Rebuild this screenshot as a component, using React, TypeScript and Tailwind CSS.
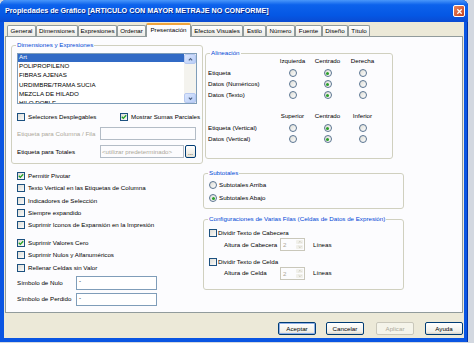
import clsx from 'clsx'

const Check = ({ on, off }: { on?: boolean; off?: boolean }) => (
  <span
    className={clsx(
      'flex h-[8px] w-[8px] shrink-0 items-center justify-center border bg-[linear-gradient(135deg,#dcdcd7,#fbfbf9)]',
      off ? 'border-[#c9c7ba]' : 'border-[#1c5180]'
    )}
  >
    {on && (
      <svg viewBox="0 0 6 6" className="h-[6px] w-[6px]">
        <path d="M0.8 2.8 L2.3 4.4 L5.2 1.2" fill="none" stroke="#21a121" strokeWidth="1.3" />
      </svg>
    )}
  </span>
)

const Radio = ({ on }: { on?: boolean }) => (
  <span className="flex h-[8px] w-[8px] shrink-0 items-center justify-center rounded-full border border-[#5a7491] bg-[linear-gradient(135deg,#dcdcd5,#ffffff)]">
    {on && <span className="h-[3px] w-[3px] rounded-full bg-[#2c9f2c]" />}
  </span>
)

const CheckRow = ({ on, label }: { on?: boolean; label: string }) => (
  <div className="flex h-[12.3px] items-center gap-[3px]">
    <Check on={on} />
    <span>{label}</span>
  </div>
)

const Group = ({
  title,
  className,
  children,
}: {
  title: string
  className?: string
  children: React.ReactNode
}) => (
  <fieldset className={clsx('rounded-[3px] border border-[#d0d0bf] p-0', className)}>
    <legend className="ml-[4px] px-[1px] leading-[8px] text-[#0046d5]">{title}</legend>
    {children}
  </fieldset>
)

const Spin = () => (
  <div className="flex h-[13px] w-[25px] border border-[#c9c7ba] bg-[#fcfcfe]">
    <span className="flex-1 pl-[2px] leading-[11px] text-[#aca899]">2</span>
    <div className="flex w-[9px] flex-col gap-px p-px">
      {['M1 4 L3 2 L5 4', 'M1 2 L3 4 L5 2'].map((d) => (
        <span key={d} className="flex flex-1 items-center justify-center rounded-[1px] bg-[#f1f0ea]">
          <svg viewBox="0 0 6 6" className="h-[4px] w-[4px]">
            <path d={d} fill="none" stroke="#c2c0b4" strokeWidth="1.2" />
          </svg>
        </span>
      ))}
    </div>
  </div>
)

const Btn = ({ text, kind, className }: { text: string; kind?: 'default' | 'off'; className?: string }) => (
  <div
    className={clsx(
      'flex h-[13px] w-[38px] items-center justify-center rounded-[2px] border',
      kind === 'off'
        ? 'border-[#c9c7ba] bg-[#f5f4ea] text-[#aca899]'
        : 'border-[#003c74] bg-[linear-gradient(180deg,#ffffff,#f0efe9_80%,#d8d2c6)]',
      kind === 'default' && 'shadow-[inset_0_0_0_1px_#8fb0e8]',
      className
    )}
  >
    {text}
  </div>
)

const tabs = [
  ['General', 'w-[29px]'],
  ['Dimensiones', 'w-[42px]'],
  ['Expresiones', 'w-[39px]'],
  ['Ordenar', 'w-[29px]'],
  ['Presentación', 'w-[45px]'],
  ['Efectos Visuales', 'w-[52px]'],
  ['Estilo', 'w-[23px]'],
  ['Número', 'w-[29px]'],
  ['Fuente', 'w-[27px]'],
  ['Diseño', 'w-[26px]'],
  ['Título', 'w-[22px]'],
]

const items = ['Art', 'POLIPROPILENO', 'FIBRAS AJENAS', 'URDIMBRE/TRAMA SUCIA', 'MEZCLA DE HILADO', 'HILO DOBLE']

const alignRows = ['Etiqueta', 'Datos (Numéricos)', 'Datos (Texto)']

const AlignRow = ({ label, sel, className }: { label: string; sel: number; className?: string }) => (
  <div className={clsx('flex h-[11px] items-center', className)}>
    <span className="w-[67px]">{label}</span>
    {[0, 1, 2].map((i) => (
      <span key={i} className="flex w-[35px] justify-center">
        <Radio on={i === sel} />
      </span>
    ))}
  </div>
)

const AlignHead = ({ cols, className }: { cols: string[]; className?: string }) => (
  <div className={clsx('flex h-[8px] items-center', className)}>
    <span className="w-[67px]" />
    {cols.map((c) => (
      <span key={c} className="w-[35px] text-center">
        {c}
      </span>
    ))}
  </div>
)

const ScrollBtn = ({ d }: { d: string }) => (
  <span className="flex h-[10px] w-full items-center justify-center rounded-[2px] border border-[#b6c8f0] bg-[linear-gradient(135deg,#dbe6fd,#b8cdf7)]">
    <svg viewBox="0 0 6 6" className="h-[5px] w-[5px]">
      <path d={d} fill="none" stroke="#4d6185" strokeWidth="1.4" />
    </svg>
  </span>
)

export default function App() {
  return (
    <div className="h-[343px] w-[474px] overflow-hidden whitespace-nowrap bg-[#d3d8e0] font-['Liberation_Sans',Arial,sans-serif] text-[6.2px] leading-[8px] text-black">
      <div className="flex h-[342px] w-[468px] flex-col overflow-hidden rounded-t-[6px] bg-[#0a55e2] shadow-[inset_-1px_0_0_#0032a8]">
        {/* title bar */}
        <div className="flex h-[22px] items-center justify-between bg-[linear-gradient(180deg,#4a97fa_0%,#0c62ec_22%,#0557e4_70%,#0a4bd2_100%)] pl-[5px] pr-[3px]">
          <span className="text-[7.2px] font-bold text-white [text-shadow:1px_1px_0_#0a2a8a]">
            Propiedades de Gráfico [ARTICULO CON MAYOR METRAJE NO CONFORME]
          </span>
          <span className="flex h-[12px] w-[12px] items-center justify-center rounded-[2px] border border-white bg-[linear-gradient(135deg,#e8865f,#c4421c)]">
            <svg viewBox="0 0 8 8" className="h-[7px] w-[7px]">
              <path d="M1.5 1.5 L6.5 6.5 M6.5 1.5 L1.5 6.5" stroke="white" strokeWidth="1.5" />
            </svg>
          </span>
        </div>

        {/* body */}
        <div className="mx-[4px] flex flex-1 flex-col bg-[#ece9d8] pt-[1px]">
          <div className="relative z-10 flex h-[14px] items-end pl-[3px]">
            {tabs.map(([t, w]) =>
              t === 'Presentación' ? (
                <div
                  key={t}
                  className={clsx(
                    'flex h-[14px] items-center justify-center rounded-t-[2px] border-x border-t-2 border-x-[#919b9c] border-t-[#f0a43c] bg-[#fcfcfe] pb-[2px]',
                    w
                  )}
                >
                  {t}
                </div>
              ) : (
                <div
                  key={t}
                  className={clsx(
                    'mb-[1px] flex h-[11px] items-center justify-center rounded-t-[2px] border border-b-0 border-[#919b9c] bg-[linear-gradient(180deg,#ffffff,#ecebe5)]',
                    w
                  )}
                >
                  {t}
                </div>
              )
            )}
          </div>

          {/* panel */}
          <div className="-mt-px ml-[1px] flex h-[277px] w-[458px] border border-[#919b9c] bg-[#fcfcfe] pl-[5px] pt-[4px]">
            {/* left column */}
            <div className="flex w-[192px] flex-col">
              <Group title="Dimensiones y Expresiones" className="w-[189px]">
                <div className="pb-[5px] pl-[5px] pr-[2px] pt-[4px]">
                  <div className="flex h-[51px] w-[180px] border border-[#7f9db9] bg-white">
                    <div className="flex-1 overflow-hidden">
                      <div className="-mt-[1.5px]">
                        {items.map((it, i) => (
                          <div
                            key={it}
                            className={clsx(
                              'flex h-[9.2px] items-center pl-[1px]',
                              i === 0 && 'bg-[#316ac5] text-white'
                            )}
                          >
                            {it}
                          </div>
                        ))}
                      </div>
                    </div>
                    <div className="flex w-[12px] flex-col justify-between bg-[#f4f3ee]">
                      <ScrollBtn d="M1 4 L3 2 L5 4" />
                      <ScrollBtn d="M1 2 L3 4 L5 2" />
                    </div>
                  </div>
                  <div className="mt-[8px] flex h-[10px] items-center">
                    <div className="flex w-[103px] items-center gap-[3px]">
                      <Check />
                      <span>Selectores Desplegables</span>
                    </div>
                    <div className="flex items-center gap-[3px]">
                      <Check on />
                      <span>Mostrar Sumas Parciales</span>
                    </div>
                  </div>
                  <div className="mt-[5px] flex h-[13px] items-center">
                    <span className="w-[83px] text-[#aca899]">Etiqueta para Columna / Fila</span>
                    <div className="h-full w-[96px] border border-[#b3bcc6] bg-[#fcfcfe]" />
                  </div>
                  <div className="mt-[5px] flex h-[13px] items-center">
                    <span className="w-[83px]">Etiqueta para Totales</span>
                    <div className="flex h-full w-[84px] items-center border border-[#b3bcc6] bg-[#fcfcfe] pl-[1px] text-[#aca899]">
                      &lt;utilizar predeterminado&gt;
                    </div>
                    <div className="ml-[1px] flex h-full w-[11px] items-end justify-center rounded-[2px] border border-[#003c74] bg-[linear-gradient(180deg,#ffffff,#e6e3d8)] pb-[2px] leading-[5px]">
                      ...
                    </div>
                  </div>
                </div>
              </Group>

              <div className="mt-[6px] pl-[6px]">
                <CheckRow on label="Permitir Pivotar" />
                <CheckRow label="Texto Vertical en las Etiquetas de Columna" />
                <CheckRow label="Indicadores de Selección" />
                <CheckRow label="Siempre expandido" />
                <CheckRow label="Suprimir Iconos de Expansión en la Impresión" />
                <div className="h-[5.5px]" />
                <CheckRow on label="Suprimir Valores Cero" />
                <CheckRow label="Suprimir Nulos y Alfanuméricos" />
                <CheckRow label="Rellenar Celdas sin Valor" />
                <div className="mt-[2px] flex h-[14px] items-center">
                  <span className="w-[59px]">Símbolo de Nulo</span>
                  <div className="h-full w-[81px] border border-[#7f9db9] bg-white pl-[2px]">-</div>
                </div>
                <div className="mt-[3px] flex h-[13px] items-center">
                  <span className="w-[59px]">Símbolo de Perdido</span>
                  <div className="h-full w-[81px] border border-[#7f9db9] bg-white pl-[2px]">-</div>
                </div>
              </div>
            </div>

            {/* right column */}
            <div className="flex w-[201px] flex-col">
              <Group title="Alineación" className="ml-[2px] mt-[8px] w-[188px]">
                <div className="pb-[13.5px] pl-[2px]">
                  <AlignHead cols={['Izquierda', 'Centrado', 'Derecha']} />
                  <div className="mt-[2.5px]">
                    {alignRows.map((l) => (
                      <AlignRow key={l} label={l} sel={1} />
                    ))}
                  </div>
                  <AlignHead cols={['Superior', 'Centrado', 'Inferior']} className="mt-[11.5px]" />
                  <AlignRow label="Etiqueta (Vertical)" sel={1} className="mt-[2.5px]" />
                  <AlignRow label="Datos (Vertical)" sel={1} />
                </div>
              </Group>

              <Group title="Subtotales" className="mt-[10px] w-[201px]">
                <div className="flex flex-col gap-px pb-[4px] pl-[5px] pt-[2px]">
                  <div className="flex h-[12px] items-center gap-[2px]">
                    <Radio />
                    <span>Subtotales Arriba</span>
                  </div>
                  <div className="flex h-[12px] items-center gap-[2px]">
                    <Radio on />
                    <span>Subtotales Abajo</span>
                  </div>
                </div>
              </Group>

              <Group
                title="Configuraciones de Varias Filas (Celdas de Datos de Expresión)"
                className="mt-[6px] w-[201px]"
              >
                <div className="pb-[9px] pl-[5px] pt-[5px]">
                  <div className="flex h-[10px] items-center gap-[1px]">
                    <Check />
                    <span>Dividir Texto de Cabecera</span>
                  </div>
                  <div className="flex h-[13px] items-center pl-[15px]">
                    <span className="w-[56px]">Altura de Cabecera</span>
                    <Spin />
                    <span className="ml-[8px]">Líneas</span>
                  </div>
                  <div className="mt-[6px] flex h-[9px] items-center gap-[1px]">
                    <Check />
                    <span>Dividir Texto de Celda</span>
                  </div>
                  <div className="mt-[0.5px] flex h-[13px] items-center pl-[15px]">
                    <span className="w-[56px]">Altura de Celda</span>
                    <Spin />
                    <span className="ml-[8px]">Líneas</span>
                  </div>
                </div>
              </Group>
            </div>
          </div>

          {/* footer buttons */}
          <div className="mt-[9px] flex justify-end pr-[1px]">
            <Btn text="Aceptar" kind="default" />
            <Btn text="Cancelar" className="ml-[10px]" />
            <Btn text="Aplicar" kind="off" className="ml-[12px]" />
            <Btn text="Ayuda" className="ml-[11px]" />
          </div>
        </div>
        <div className="h-[4px]" />
      </div>
    </div>
  )
}
